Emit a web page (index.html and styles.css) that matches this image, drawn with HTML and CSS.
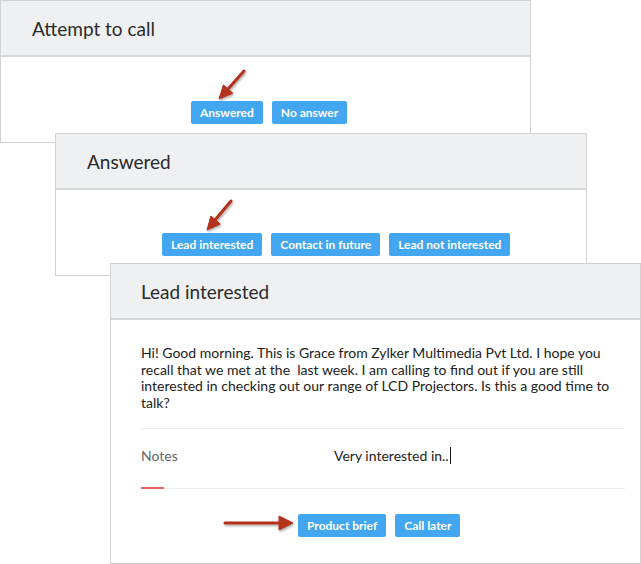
FILE: index.html
```html
<!DOCTYPE html>
<html>
<head>
<meta charset="utf-8">
<link rel="stylesheet" href="styles.css">
</head>
<body>
<div class="page">
  <section class="card card-1">
    <header class="card-head"><h2 class="title">Attempt to call</h2></header>
    <div class="card-body actions actions-1">
      <button class="btn">Answered</button>
      <button class="btn">No answer</button>
    </div>
  </section>

  <section class="card card-2">
    <header class="card-head"><h2 class="title">Answered</h2></header>
    <div class="card-body actions actions-2">
      <button class="btn">Lead interested</button>
      <button class="btn">Contact in future</button>
      <button class="btn">Lead not interested</button>
    </div>
  </section>

  <section class="card card-3">
    <header class="card-head"><h2 class="title">Lead interested</h2></header>
    <div class="card-body script-body">
      <p class="script">Hi! Good morning. This is Grace from Zylker Multimedia Pvt Ltd. I hope you recall that we met at the&nbsp; last week. I am calling to find out if you are still interested in checking out our range of LCD Projectors. Is this a good time to talk?</p>
      <div class="notes">
        <span class="notes-label">Notes</span>
        <span class="notes-value">Very interested in..<span class="caret"></span></span>
      </div>
      <div class="actions actions-3">
        <button class="btn">Product brief</button>
        <button class="btn">Call later</button>
      </div>
    </div>
  </section>

  <svg class="arrows" width="641" height="564" viewBox="0 0 641 564">
    <defs>
      <filter id="sh" x="-30%" y="-30%" width="160%" height="160%">
        <feDropShadow dx="1" dy="1.5" stdDeviation="1.2" flood-color="#000" flood-opacity="0.35"/>
      </filter>
    </defs>
    <g filter="url(#sh)" fill="#b3301f" stroke="#b3301f">
      <line x1="244" y1="71" x2="228" y2="89" stroke-width="3" stroke-linecap="round"/>
      <polygon points="219,99 232.8,93.2 223.4,84.9" stroke-width="1" stroke-linejoin="round"/>
      <line x1="231" y1="201" x2="215" y2="220" stroke-width="3" stroke-linecap="round"/>
      <polygon points="207,230 220.2,224 210.9,216" stroke-width="1" stroke-linejoin="round"/>
      <line x1="225" y1="523" x2="281" y2="523" stroke-width="3" stroke-linecap="round"/>
      <polygon points="293,523 279,516 279,530" stroke-width="1" stroke-linejoin="round"/>
    </g>
  </svg>
</div>
</body>
</html>
```
FILE: styles.css
```css
* { box-sizing: border-box; }
html, body { margin: 0; padding: 0; background: #ffffff; }
body { font-family: Lato, "Open Sans", sans-serif; color: #222; }

.page { position: relative; width: 641px; height: 564px; overflow: hidden; }

.card {
  background: #fff;
  border: 1px solid #d2d2d2;
  display: flex;
  flex-direction: column;
  position: relative;
}
.card-1 { width: 531px; height: 143px; margin-left: 0; }
.card-2 { width: 532px; height: 143px; margin-left: 55px; margin-top: -10px; }
.card-3 { width: 531px; height: 301px; margin-left: 110px; margin-top: -13px; }

.card-head {
  height: 56px;
  background: #eff0f2;
  border-bottom: 2px solid #d6d7d9;
  display: flex;
  align-items: center;
  padding-left: 31px;
  flex: none;
}
.card-3 .card-head { padding-left: 30px; }
.title {
  margin: 0;
  font-size: 19px;
  font-weight: 400;
  color: #2b2b2b;
}

.actions { display: flex; gap: 9px; }
.actions-1 { padding: 44px 0 0 190px; }
.actions-2 { padding: 43px 0 0 106px; }
.actions-3 { padding: 25px 0 0 157px; }

.btn {
  height: 23px;
  padding: 0 9px;
  border: none;
  border-radius: 2px;
  background: #42a6f0;
  color: #fff;
  font-family: Lato, "Open Sans", sans-serif;
  font-size: 12px;
  font-weight: 700;
  line-height: 23px;
}

.script-body { padding: 25px 15px 0 30px; }
.script {
  margin: 0;
  font-size: 14px;
  line-height: 16.7px;
  color: #222;
  padding-bottom: 16px;
  border-bottom: 1px solid #ececec;
}

.notes {
  display: flex;
  position: relative;
  padding: 18px 0 24px 0;
  border-bottom: 1px solid #ececec;
  font-size: 14px;
  line-height: 17px;
}
.notes::after {
  content: "";
  position: absolute;
  left: 0;
  bottom: -1px;
  width: 23px;
  height: 2px;
  background: #e36a62;
}
.notes-label { width: 193px; color: #666; }
.notes-value { color: #222; display: flex; align-items: center; }
.caret { display: inline-block; width: 1px; height: 17px; background: #111; margin-left: 1px; }

.arrows { position: absolute; left: 0; top: 0; pointer-events: none; }
```
